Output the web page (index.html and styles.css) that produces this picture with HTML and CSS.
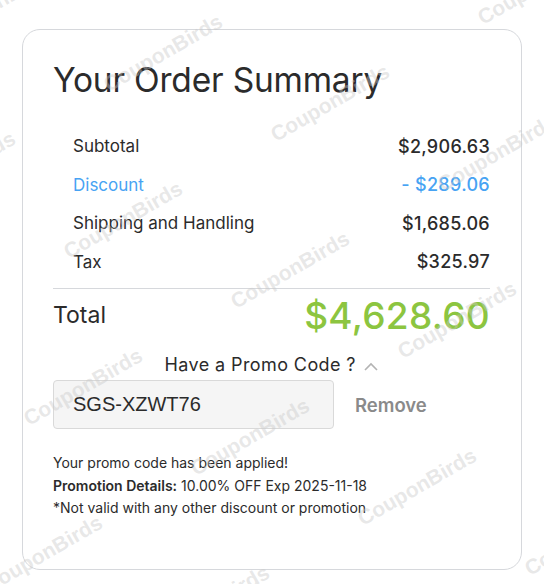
FILE: index.html
```html
<!DOCTYPE html>
<html lang="en">
<head>
  <meta charset="UTF-8">
  <title>Your Order Summary</title>
  <link rel="stylesheet" href="styles.css">
</head>
<body>
  <div class="summary">
    <h1>Your Order Summary</h1>

    <div class="lines">
      <div class="line"><span>Subtotal</span><strong>$2,906.63</strong></div>
      <div class="line discount"><span>Discount</span><strong>- $289.06</strong></div>
      <div class="line"><span>Shipping and Handling</span><strong>$1,685.06</strong></div>
      <div class="line"><span>Tax</span><strong>$325.97</strong></div>
    </div>

    <div class="total">
      <span>Total</span>
      <strong>$4,628.60</strong>
    </div>

    <div class="promo-toggle">
      Have a Promo Code ?
      <svg width="14" height="9" viewBox="0 0 14 9"><path d="M1 8 L7 2 L13 8" fill="none" stroke="#b3b3b3" stroke-width="1.6"/></svg>
    </div>

    <div class="promo-form">
      <input type="text" value="SGS-XZWT76">
      <button>Remove</button>
    </div>

    <div class="promo-msg">
      <p>Your promo code has been applied!</p>
      <p><b>Promotion Details:</b> 10.00% OFF Exp 2025-11-18</p>
      <p>*Not valid with any other discount or promotion</p>
    </div>
  </div>

  <!-- watermark -->
  <div class="wm">
    <span style="left:-4px;top:3px">CouponBirds</span>
    <span style="left:163px;top:53px">CouponBirds</span>
    <span style="left:330px;top:103px">CouponBirds</span>
    <span style="left:497px;top:153px">CouponBirds</span>
    <span style="left:537px;top:-14px">CouponBirds</span>
    <span style="left:-44px;top:170px">CouponBirds</span>
    <span style="left:123px;top:220px">CouponBirds</span>
    <span style="left:290px;top:270px">CouponBirds</span>
    <span style="left:457px;top:320px">CouponBirds</span>
    <span style="left:83px;top:387px">CouponBirds</span>
    <span style="left:250px;top:437px">CouponBirds</span>
    <span style="left:417px;top:487px">CouponBirds</span>
    <span style="left:584px;top:537px">CouponBirds</span>
    <span style="left:43px;top:554px">CouponBirds</span>
    <span style="left:210px;top:604px">CouponBirds</span>
  </div>
</body>
</html>
```

FILE: styles.css
```css
body {
  margin: 0;
  background: #fff;
  font-family: Inter, "Noto Sans", sans-serif;
  color: #2b2b2b;
  overflow: hidden;
}
.summary {
  margin: 29px 0 0 22px;
  width: 437px;
  height: 517px;
  padding: 22px 31px 0 30px;
  border: 1px solid #d6d8dc;
  border-radius: 18px;
}
h1 {
  margin: 0;
  font-size: 33.5px;
  font-weight: 400;
  line-height: 56px;
  letter-spacing: -0.2px;
}
.lines {
  padding: 19px 0 7px 20px;
  border-bottom: 1px solid #d6d8dc;
}
.line {
  display: flex;
  justify-content: space-between;
  align-items: center;
  height: 38.5px;
  font-size: 17px;
}
.line strong {
  font-size: 18px;
  font-weight: 500;
  letter-spacing: 0.3px;
}
.discount {
  color: #47a3f3;
}
.total {
  display: flex;
  justify-content: space-between;
  align-items: center;
  height: 52px;
  font-size: 23px;
}
.total strong {
  color: #8cc540;
  font-size: 37px;
  font-weight: 500;
  letter-spacing: 0.3px;
}
.promo-toggle {
  margin-top: 12px;
  text-align: center;
  font-size: 18px;
  letter-spacing: 0.4px;
  line-height: 24px;
}
.promo-toggle svg {
  margin-left: 3px;
}
.promo-form {
  display: flex;
  align-items: center;
  margin-top: 3px;
}
.promo-form input {
  width: 281px;
  height: 49px;
  box-sizing: border-box;
  padding: 0 19px;
  background: #f5f5f5;
  border: 1px solid #d9d9d9;
  border-radius: 4px;
  font-family: "Liberation Sans", Arial, sans-serif;
  font-size: 20px;
  color: #2b2b2b;
}
.promo-form button {
  margin-left: 10px;
  padding: 0 11px;
  background: none;
  border: none;
  font-family: Inter, sans-serif;
  font-size: 18.5px;
  font-weight: 600;
  color: #8a8a8a;
}
.promo-msg {
  margin-top: 23px;
  font-size: 14px;
  line-height: 22.5px;
}
.promo-msg p {
  margin: 0;
}
.promo-msg b {
  font-weight: 600;
}
.wm {
  position: absolute;
  top: 0;
  left: 0;
  width: 544px;
  height: 584px;
  overflow: hidden;
  pointer-events: none;
}
.wm span {
  position: absolute;
  transform: translate(-50%, -50%) rotate(-30deg);
  font-family: "Liberation Sans", Arial, sans-serif;
  font-size: 21px;
  font-weight: 700;
  color: rgba(200, 200, 200, 0.42);
  white-space: nowrap;
}
```
